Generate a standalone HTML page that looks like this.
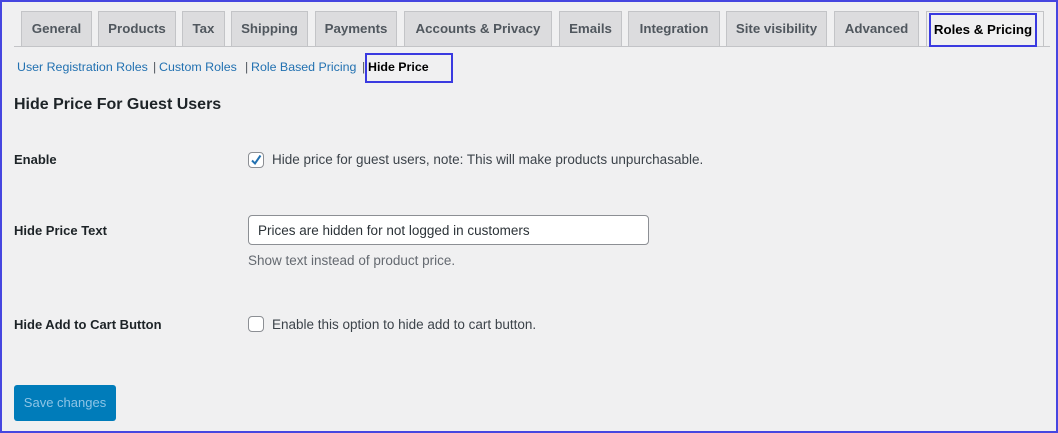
<!DOCTYPE html>
<html><head><meta charset="utf-8"><style>
*{box-sizing:border-box;margin:0;padding:0}
body{width:1058px;height:433px;background:#f0f0f1;font-family:"Liberation Sans",sans-serif;color:#1d2327;position:relative;overflow:hidden}
.frame{position:absolute;left:0;top:0;width:1058px;height:433px;border:2px solid #4646e0;pointer-events:none}
.tab{position:absolute;top:11px;height:35px;background:#dcdcde;border:1px solid #c3c4c7;border-bottom:none;font-size:13.3px;font-weight:bold;color:#50575e;text-align:center;line-height:34px}
.line{position:absolute;left:14px;top:46px;width:1036px;height:1px;background:#c3c4c7}
.sub{position:absolute;top:59px;font-size:12.4px;color:#2271b1;line-height:16px}
.abs{position:absolute}
.lbl{position:absolute;left:14px;font-size:13px;font-weight:bold;color:#1d2327}
.cb{position:absolute;left:248px;width:16px;height:16px;border:1px solid #8c8f94;border-radius:4px;background:#fff}
.txt{position:absolute;left:272px;font-size:13.5px;color:#3c434a}
</style></head><body>
<div class="tab" style="left:21px;width:71px">General</div>
<div class="tab" style="left:98px;width:78px">Products</div>
<div class="tab" style="left:182px;width:43px">Tax</div>
<div class="tab" style="left:231px;width:77px">Shipping</div>
<div class="tab" style="left:315px;width:82px">Payments</div>
<div class="tab" style="left:404px;width:148px">Accounts &amp; Privacy</div>
<div class="tab" style="left:559px;width:63px">Emails</div>
<div class="tab" style="left:628px;width:92px">Integration</div>
<div class="tab" style="left:726px;width:101px">Site visibility</div>
<div class="tab" style="left:834px;width:85px">Advanced</div>
<div class="tab" style="left:926px;width:118px;background:#f0f0f1;color:#000"></div>
<div class="line"></div>
<div class="abs" style="left:929px;top:13px;width:108px;height:34px;border:2px solid #3a3ae0;font-size:13.3px;font-weight:bold;color:#000;text-align:center;line-height:30px;background:#f0f0f1">Roles &amp; Pricing</div>
<div class="sub" style="left:17px">User Registration Roles</div>
<div class="sub" style="left:153px;color:#50575e">|</div>
<div class="sub" style="left:159px">Custom Roles</div>
<div class="sub" style="left:245px;color:#50575e">|</div>
<div class="sub" style="left:251px">Role Based Pricing</div>
<div class="sub" style="left:362px;color:#50575e">|</div>
<div class="sub" style="left:368px;color:#000;font-weight:bold">Hide Price</div>
<div class="abs" style="left:365px;top:53px;width:88px;height:30px;border:2px solid #3a3ae0"></div>
<div class="abs" style="left:14px;top:96px;font-size:16px;font-weight:bold">Hide Price For Guest Users</div>
<div class="lbl" style="top:152px">Enable</div>
<div class="cb" style="top:152px"><svg width="14" height="14" viewBox="0 0 14 14" style="position:absolute;left:0;top:0"><path d="M3 7.5 L6 10.5 L11.5 2.5" stroke="#2271b1" stroke-width="2" fill="none"/></svg></div>
<div class="txt" style="top:152px">Hide price for guest users, note: This will make products unpurchasable.</div>
<div class="lbl" style="top:223px">Hide Price Text</div>
<div class="abs" style="left:248px;top:215px;width:401px;height:30px;border:1px solid #8c8f94;border-radius:4px;background:#fff;font-size:13.5px;padding-left:9px;line-height:30px;color:#2c3338">Prices are hidden for not logged in customers</div>
<div class="abs" style="left:248px;top:253px;font-size:13.5px;color:#646970">Show text instead of product price.</div>
<div class="lbl" style="top:317px">Hide Add to Cart Button</div>
<div class="cb" style="top:316px"></div>
<div class="txt" style="top:317px">Enable this option to hide add to cart button.</div>
<div class="abs" style="left:14px;top:385px;width:102px;height:36px;background:#007cba;border-radius:3px;color:#8cc4e6;font-size:13px;text-align:center;line-height:36px">Save changes</div>
<div class="frame"></div>
</body></html>
